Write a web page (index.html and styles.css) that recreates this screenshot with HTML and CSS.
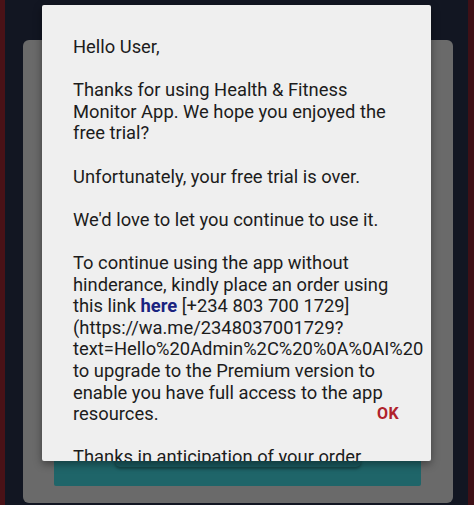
FILE: index.html
```html
<!DOCTYPE html>
<html>
<head>
<meta charset="utf-8">
<link rel="stylesheet" href="styles.css">
</head>
<body>
<div class="screen">
  <div class="app">
    <div class="card">
      <div class="teal">
        <div class="teal-btn"></div>
      </div>
    </div>
  </div>
  <div class="dialog">
    <div class="message">Hello User,<br><br>Thanks for using Health &amp; Fitness<br>Monitor App. We hope you enjoyed the<br>free trial?<br><br>Unfortunately, your free trial is over.<br><br>We'd love to let you continue to use it.<br><br>To continue using the app without<br>hinderance, kindly place an order using<br>this link <b class="link">here</b> [+234 803 700 1729]<br>(https://wa.me/2348037001729?<br>text=Hello%20Admin%2C%20%0A%0AI%20<br>to upgrade to the Premium version to<br>enable you have full access to the app<br>resources.<br><br>Thanks in anticipation of your order.</div>
    <div class="ok">OK</div>
  </div>
</div>
</body>
</html>
```
FILE: styles.css
```css
html, body {
  margin: 0;
  padding: 0;
}
body {
  width: 474px;
  height: 505px;
  overflow: hidden;
  background: #121622;
  font-family: Roboto, "Noto Sans", sans-serif;
}
.screen {
  position: relative;
  width: 474px;
  height: 505px;
  box-sizing: border-box;
  border-left: 5px solid #4a1217;
  border-right: 6px solid #3f1016;
  background: #121622;
}
.app {
  padding: 40px 0 0 18px;
}
.card {
  width: 430px;
  height: 463px;
  background: #6a6a6a;
  border-radius: 6px;
  box-sizing: border-box;
  padding: 0 32px 17px 31px;
  display: flex;
  flex-direction: column;
  justify-content: flex-end;
}
.teal {
  height: 86px;
  background: #1f6569;
  border-radius: 2px;
  box-sizing: border-box;
  padding: 0 0 19px 61px;
  display: flex;
  flex-direction: column;
  justify-content: flex-end;
}
.teal-btn {
  width: 246px;
  height: 40px;
  background: #1a5a5f;
  border-radius: 5px;
  box-shadow: 0 2px 3px rgba(0,0,0,0.35);
}
.dialog {
  position: absolute;
  left: 37px;
  top: 5px;
  width: 389px;
  height: 456px;
  background: #efefef;
  border-radius: 2px;
  overflow: hidden;
  box-shadow: 0 3px 8px rgba(0,0,0,0.4);
}
.message {
  padding: 31px 0 0 31px;
  font-size: 18.35px;
  line-height: 21.6px;
  color: #1c1c1c;
  white-space: nowrap;
}
.link {
  color: #1a2380;
  font-weight: 700;
}
.ok {
  position: absolute;
  left: 335px;
  top: 399px;
  font-size: 16px;
  font-weight: 700;
  letter-spacing: 0.5px;
  color: #b0222b;
  line-height: 20px;
}
```
